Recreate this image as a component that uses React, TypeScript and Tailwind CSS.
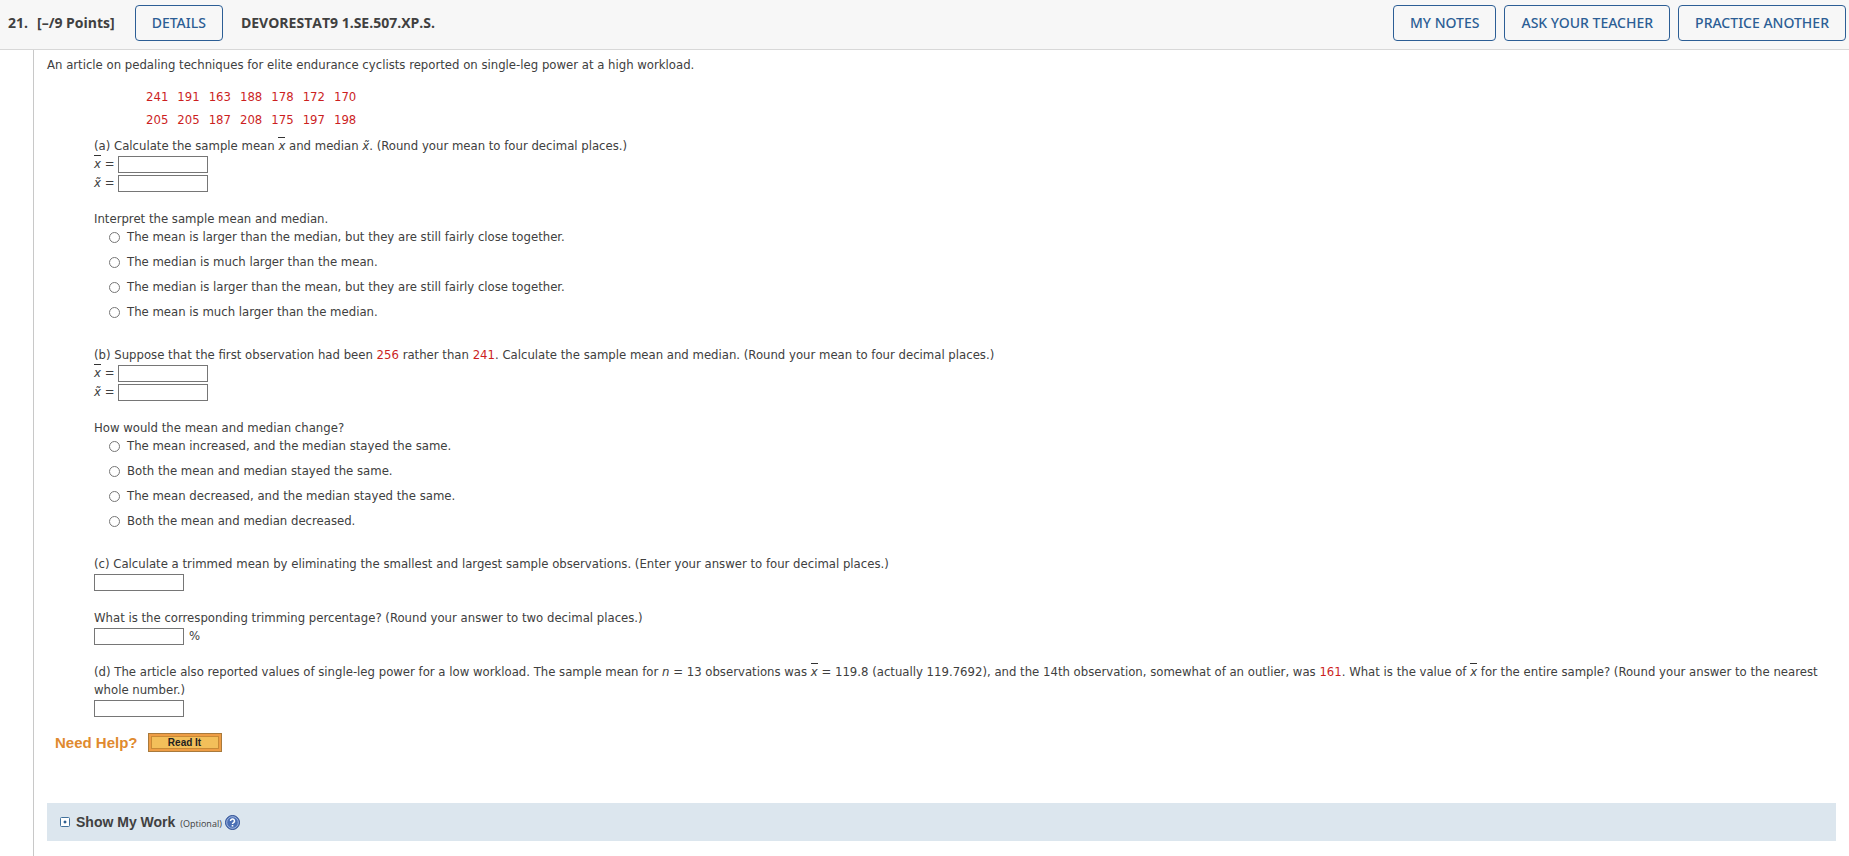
import { useState } from "react";
import type { ReactNode } from "react";

const data = [
  [241, 191, 163, 188, 178, 172, 170],
  [205, 205, 187, 208, 175, 197, 198],
];

const interpretOptions = [
  "The mean is larger than the median, but they are still fairly close together.",
  "The median is much larger than the mean.",
  "The median is larger than the mean, but they are still fairly close together.",
  "The mean is much larger than the median.",
];

const changeOptions = [
  "The mean increased, and the median stayed the same.",
  "Both the mean and median stayed the same.",
  "The mean decreased, and the median stayed the same.",
  "Both the mean and median decreased.",
];

const headerBtn =
  "h-9 shrink-0 rounded border border-[#2c5e95] px-4 font-['Noto_Sans',sans-serif] text-[14px] font-medium text-[#2c5e95]";
const answerClass = "h-[17px] w-[90px] border border-[#767676] bg-white px-1 text-[12px]";

function XBar() {
  return (
    <span className="relative italic">
      x
      <span className="absolute -top-px left-0 h-px w-[7px] bg-[#333]" />
    </span>
  );
}

function XTilde() {
  return <i>{"x\u0303"}</i>;
}

function Red({ children }: { children: ReactNode }) {
  return <span className="text-[#cc1f1f]">{children}</span>;
}

function StatInputs({ part }: { part: string }) {
  return (
    <div className="flex flex-col gap-px">
      <label className="flex h-[18px] items-center">
        <span className="w-6 whitespace-nowrap">
          <XBar /> =
        </span>
        <input type="text" name={`${part}-mean`} className={answerClass} />
      </label>
      <label className="flex h-[18px] items-center">
        <span className="w-6 whitespace-nowrap">
          <XTilde /> =
        </span>
        <input type="text" name={`${part}-median`} className={answerClass} />
      </label>
    </div>
  );
}

function RadioList({ name, legend, options }: { name: string; legend: string; options: string[] }) {
  const [selected, setSelected] = useState("");

  return (
    <fieldset>
      <legend>{legend}</legend>
      {options.map((option) => (
        <label key={option} className="mb-[7px] ml-[15px] flex items-center gap-[7px]">
          <input
            type="radio"
            name={name}
            checked={selected === option}
            onChange={() => setSelected(option)}
            className="size-[11px]"
          />
          {option}
        </label>
      ))}
    </fieldset>
  );
}

function Header() {
  return (
    <header className="flex h-[50px] items-start justify-between border-b border-[#d8d8d8] bg-[#f7f7f7] py-[5px] pr-[3px] pl-2 font-['Open_Sans',sans-serif]">
      <div className="flex items-center text-[14px] font-bold text-[#404040]">
        <span className="w-[29px]">21.</span>
        <span className="mr-5">[–/9 Points]</span>
        <button type="button" className={`${headerBtn} mr-[18px]`}>
          DETAILS
        </button>
        <span>DEVORESTAT9 1.SE.507.XP.S.</span>
      </div>
      <div className="flex gap-2">
        <button type="button" className={headerBtn}>MY NOTES</button>
        <button type="button" className={headerBtn}>ASK YOUR TEACHER</button>
        <button type="button" className={headerBtn}>PRACTICE ANOTHER</button>
      </div>
    </header>
  );
}

function ShowMyWork() {
  return (
    <div className="flex h-[38px] items-center bg-[#dce6ee] pl-[13px] font-['Liberation_Sans',sans-serif]">
      <button type="button" aria-label="Expand" className="mr-[6px]">
        <svg width="10" height="10" viewBox="0 0 10 10">
          <rect x="0.5" y="0.5" width="9" height="9" rx="1" fill="#fff" stroke="#41719c" />
          <path d="M3 5h4M5 3v4" stroke="#7f9fc0" />
          <rect x="4" y="4" width="2" height="2" fill="#2f5f8f" />
        </svg>
      </button>
      <span className="text-[14px] font-bold text-[#404040]">Show My Work</span>
      <span className="ml-[5px] pt-[3px] font-['Open_Sans',sans-serif] text-[9px]">(Optional)</span>
      <button type="button" aria-label="Help" className="ml-[3px]">
        <svg width="15" height="15" viewBox="0 0 15 15">
          <circle cx="7.5" cy="7.5" r="7" fill="#4a6fb5" stroke="#2f4f94" />
          <circle cx="7.5" cy="7.5" r="5.8" fill="none" stroke="#b9c9e8" strokeWidth="0.8" />
          <path d="M5.5 6a2 2 0 1 1 3 1.7c-.7.4-1 .7-1 1.4" fill="none" stroke="#fff" strokeWidth="1.5" />
          <rect x="6.7" y="10" width="1.6" height="1.5" fill="#fff" />
        </svg>
      </button>
    </div>
  );
}

export default function App() {
  return (
    <div className="flex min-h-screen flex-col bg-white font-['DejaVu_Sans_Condensed',sans-serif] text-[13px] leading-[18px] text-[#404040]">
      <Header />
      <main className="ml-[33px] grow border-l border-[#c8c8c8] pt-[6px] pr-[13px] pl-[13px]">
        <p>
          An article on pedaling techniques for elite endurance cyclists reported on single-leg power at a
          high workload.
        </p>

        <table className="mt-[11px] ml-[99px] text-[#cc1f1f]">
          <tbody>
            {data.map((row, i) => (
              <tr key={i} className="h-[23px]">
                {row.map((value, j) => (
                  <td key={j} className="p-0 pr-[9px]">{value}</td>
                ))}
              </tr>
            ))}
          </tbody>
        </table>

        <div className="mt-[6px] ml-[47px] flex flex-col gap-[18px]">
          <section>
            <p>
              (a) Calculate the sample mean <XBar /> and median <XTilde />. (Round your mean to four decimal
              places.)
            </p>
            <StatInputs part="a" />
          </section>
          <RadioList name="interpret" legend="Interpret the sample mean and median." options={interpretOptions} />

          <section>
            <p>
              (b) Suppose that the first observation had been <Red>256</Red> rather than <Red>241</Red>.
              Calculate the sample mean and median. (Round your mean to four decimal places.)
            </p>
            <StatInputs part="b" />
          </section>
          <RadioList name="change" legend="How would the mean and median change?" options={changeOptions} />

          <label>
            <span className="block">
              (c) Calculate a trimmed mean by eliminating the smallest and largest sample observations. (Enter
              your answer to four decimal places.)
            </span>
            <span className="flex h-[18px] items-center">
              <input type="text" name="trimmed-mean" className={answerClass} />
            </span>
          </label>

          <label>
            <span className="block">
              What is the corresponding trimming percentage? (Round your answer to two decimal places.)
            </span>
            <span className="flex h-[18px] items-center gap-[5px]">
              <input type="text" name="trim-percent" className={answerClass} />%
            </span>
          </label>

          <label>
            <span className="block">
              (d) The article also reported values of single-leg power for a low workload. The sample mean for{" "}
              <i>n</i> = 13 observations was <XBar /> = 119.8 (actually 119.7692), and the 14th observation,
              somewhat of an outlier, was <Red>161</Red>. What is the value of <XBar /> for the entire sample?
              (Round your answer to the nearest whole number.)
            </span>
            <span className="flex h-[18px] items-center">
              <input type="text" name="entire-mean" className={answerClass} />
            </span>
          </label>
        </div>

        <div className="mt-4 mb-[51px] ml-2 flex items-center gap-[10px] font-['Liberation_Sans',sans-serif]">
          <span className="text-[15px] font-bold text-[#e08a2e]">Need Help?</span>
          <button
            type="button"
            className="h-[19px] w-[74px] border border-[#a97a3c] bg-[#ee9d45] p-[2px] text-[10px] leading-none font-bold text-[#222]"
          >
            <span className="flex h-full items-center justify-center border border-[#c98a35] bg-[#f3bf5a]">
              Read It
            </span>
          </button>
        </div>

        <ShowMyWork />
      </main>
    </div>
  );
}
